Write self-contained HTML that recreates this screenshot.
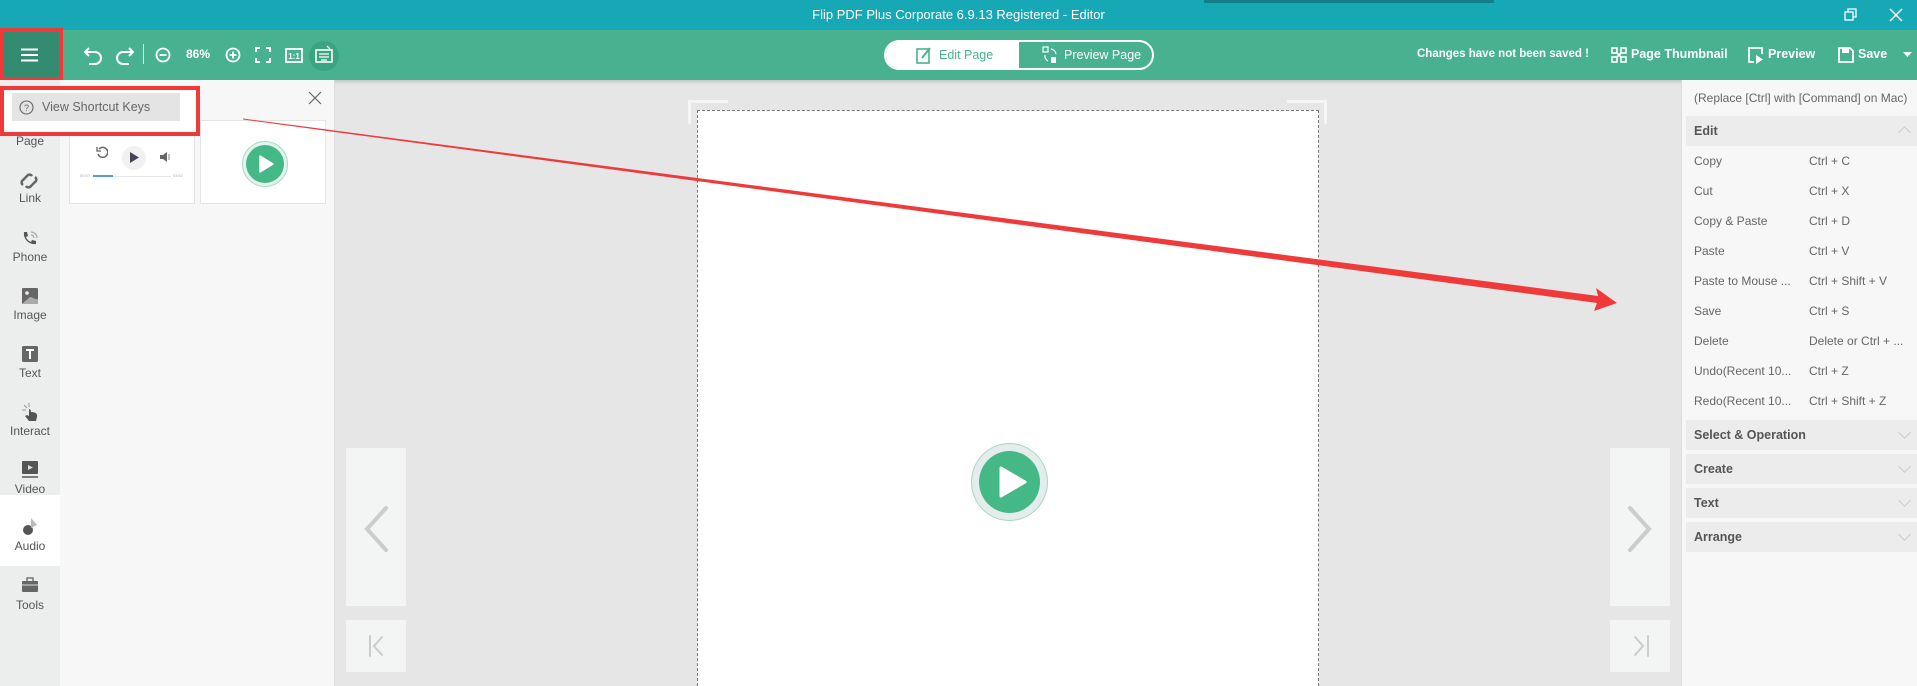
<!DOCTYPE html>
<html><head><meta charset="utf-8"><style>
*{box-sizing:border-box;margin:0;padding:0}
body{width:1917px;height:686px;overflow:hidden;position:relative;font-family:"Liberation Sans",Arial,sans-serif;background:#e6e6e6}
.a{position:absolute}
.title{left:0;top:0;width:1917px;height:30px;background:#17a8b6;color:#fff;font-size:13px;text-align:center;line-height:30px}
.tb{left:0;top:30px;width:1917px;height:50px;background:#48b290;box-shadow:0 2px 3px rgba(0,0,0,.15)}
.w{color:#fff;font-size:12.5px;font-weight:bold}
.nav{left:0;top:80px;width:60px;height:606px;background:#eceeee}
.ni{position:absolute;left:0;width:60px;text-align:center;font-size:12px;color:#555}
.panel{left:60px;top:80px;width:275px;height:606px;background:#f7f7f7;border-right:1px solid #ddd}
.rp{left:1681px;top:80px;width:236px;height:606px;background:#f7f7f7;border-left:1px solid #ddd}
.row{position:absolute;left:12px;font-size:12px;color:#666}
.row b{font-weight:normal;position:absolute;left:115px;white-space:nowrap}
.hd{position:absolute;left:4px;width:231px;height:30px;background:#ececec;font-size:12.5px;font-weight:bold;color:#555;line-height:30px;padding-left:8px}
.hd i{position:absolute;right:8px;top:8px;width:9px;height:9px;border-right:1px solid #ccc;border-bottom:1px solid #ccc;transform:rotate(45deg)}
.nb{background:#f3f4f4}
</style></head><body>
<div class="a title">Flip PDF Plus Corporate 6.9.13 Registered - Editor</div>
<div class="a" style="left:1204px;top:0;width:290px;height:3px;background:#127e88"></div>
<svg class="a" style="left:1844px;top:8px" width="14" height="14"><rect x="1" y="4" width="8" height="8" fill="none" stroke="#fff" stroke-width="1.3"/><path d="M4 4V1h8v8H9" fill="none" stroke="#fff" stroke-width="1.3"/></svg>
<svg class="a" style="left:1889px;top:8px" width="14" height="14"><path d="M1 1L13 13M13 1L1 13" stroke="#fff" stroke-width="1.5"/></svg>
<div class="a tb"></div>
<div class="a" style="left:0;top:28px;width:63px;height:53px;background:#338c6f;border:4px solid #f03a3a"></div>
<svg class="a" style="left:21px;top:48px" width="18" height="14"><path d="M0 1.5h17M0 7h17M0 12.5h17" stroke="#fff" stroke-width="2"/></svg>
<svg class="a" style="left:84px;top:45px" width="20" height="20"><path d="M5 3L1 7l4 4M1 7h10a6 6 0 010 12H5" fill="none" stroke="#fff" stroke-width="2"/></svg>
<svg class="a" style="left:114px;top:45px" width="20" height="20"><path d="M15 3l4 4-4 4M19 7H9a6 6 0 000 12h6" fill="none" stroke="#fff" stroke-width="2"/></svg>
<div class="a" style="left:143px;top:44px;width:1px;height:20px;background:#d7efe6"></div>
<svg class="a" style="left:155px;top:47px" width="16" height="16"><circle cx="8" cy="8" r="6.5" fill="none" stroke="#fff" stroke-width="1.8"/><path d="M4.5 8h7" stroke="#fff" stroke-width="1.8"/></svg>
<div class="a w" style="left:186px;top:47px;font-size:12px">86%</div>
<svg class="a" style="left:225px;top:47px" width="16" height="16"><circle cx="8" cy="8" r="6.5" fill="none" stroke="#fff" stroke-width="1.8"/><path d="M4.5 8h7M8 4.5v7" stroke="#fff" stroke-width="1.8"/></svg>
<svg class="a" style="left:255px;top:47px" width="16" height="16"><path d="M1 5V1h4M11 1h4v4M15 11v4h-4M5 15H1v-4" fill="none" stroke="#fff" stroke-width="2"/></svg>
<svg class="a" style="left:285px;top:48px" width="18" height="15"><rect x="1" y="1" width="16" height="13" fill="none" stroke="#fff" stroke-width="1.8"/><text x="9" y="11" fill="#fff" font-size="8" font-weight="bold" text-anchor="middle" font-family="Liberation Sans">1:1</text></svg>
<div class="a" style="left:309px;top:41px;width:30px;height:30px;border-radius:50%;background:#3aa37f"></div>
<svg class="a" style="left:315px;top:45px" width="18" height="20"><path d="M12 1l3 3" stroke="#fff" stroke-width="1.4"/><rect x="1" y="5" width="16" height="12" fill="none" stroke="#fff" stroke-width="1.6"/><path d="M4 9h10M4 12h10M6 15h6" stroke="#fff" stroke-width="1.3"/></svg>
<div class="a" style="left:884px;top:40px;width:270px;height:30px;border:2px solid #fff;border-radius:15px;overflow:hidden;background:#48b290">
 <div class="a" style="left:0;top:0;width:133px;height:26px;background:#fff"></div>
 <svg class="a" style="left:30px;top:4px" width="16" height="18"><rect x="1" y="3" width="12" height="14" fill="none" stroke="#48b290" stroke-width="1.6"/><path d="M6 12l8-10" stroke="#48b290" stroke-width="2"/></svg>
 <div class="a" style="left:53px;top:6px;color:#48b290;font-size:12.5px">Edit Page</div>
 <svg class="a" style="left:156px;top:4px" width="16" height="18"><rect x="1" y="1" width="5" height="5" fill="none" stroke="#fff" stroke-width="1.2"/><rect x="9" y="11" width="5" height="6" fill="#fff"/><path d="M9 3a6 6 0 015 5M3 9a6 6 0 003 6" fill="none" stroke="#fff" stroke-width="1.2"/></svg>
 <div class="a" style="left:178px;top:6px;color:#fff;font-size:12.5px">Preview Page</div>
</div>
<div class="a w" style="left:1417px;top:48px;font-size:11.5px">Changes have not been saved !</div>
<svg class="a" style="left:1611px;top:47px" width="16" height="16"><rect x="1" y="1" width="5" height="5" fill="none" stroke="#fff" stroke-width="1.6"/><rect x="10" y="1" width="5" height="5" fill="none" stroke="#fff" stroke-width="1.6"/><rect x="1" y="10" width="5" height="5" fill="none" stroke="#fff" stroke-width="1.6"/><rect x="10" y="10" width="5" height="5" fill="none" stroke="#fff" stroke-width="1.6"/><path d="M5 5l6 6M11 5l-6 6" stroke="#fff" stroke-width="1.6"/></svg>
<div class="a w" style="left:1631px;top:47px">Page Thumbnail</div>
<svg class="a" style="left:1748px;top:47px" width="16" height="17"><path d="M6 15H1V1h13v6" fill="none" stroke="#fff" stroke-width="1.8"/><path d="M8 8l7 4.5L8 17z" fill="#fff"/></svg>
<div class="a w" style="left:1768px;top:47px">Preview</div>
<svg class="a" style="left:1838px;top:47px" width="16" height="16"><path d="M1 1h11l3 3v11H1z" fill="none" stroke="#fff" stroke-width="1.8"/><rect x="4" y="1" width="7" height="5" fill="#fff"/></svg>
<div class="a w" style="left:1858px;top:47px">Save</div>
<svg class="a" style="left:1903px;top:52px" width="10" height="6"><path d="M0 0h9L4.5 5z" fill="#fff"/></svg>

<div class="a nav"></div>
<div class="a" style="left:0;top:495px;width:60px;height:71px;background:#fff"></div>
<div class="ni" style="top:134px">Page</div>
<svg class="a" style="left:20px;top:173px" width="18" height="16"><path d="M3 12a3 3 0 010-5l4-4a3 3 0 015 0M15 4a3 3 0 010 5l-4 4a3 3 0 01-5 0" fill="none" stroke="#666" stroke-width="2.5"/></svg>
<div class="ni" style="top:191px">Link</div>
<svg class="a" style="left:21px;top:230px" width="18" height="18"><path d="M3 2l3 0 1 4-2 1a8 8 0 005 5l1-2 4 1v3c-7 1-13-5-12-12z" fill="#555"/><path d="M10 2a6 6 0 016 6M10 5a3 3 0 013 3" fill="none" stroke="#aaa" stroke-width="1.3"/></svg>
<div class="ni" style="top:250px">Phone</div>
<svg class="a" style="left:22px;top:288px" width="16" height="16"><rect width="16" height="16" rx="1" fill="#666"/><path d="M0 16L8 9c3 0 5 3 8 2v5z" fill="#aaa"/><circle cx="5" cy="5" r="1.8" fill="#eee"/></svg>
<div class="ni" style="top:308px">Image</div>
<svg class="a" style="left:22px;top:346px" width="16" height="16"><rect width="16" height="16" rx="1.5" fill="#666"/><path d="M4 4h8M8 4v9" stroke="#fff" stroke-width="2"/></svg>
<div class="ni" style="top:366px">Text</div>
<svg class="a" style="left:20px;top:402px" width="20" height="20"><path d="M9 7c2 0 2 3 2 3 3 0 7 1 6 5l-1 4H9l-4-5 2-1 2 1z" fill="#555"/><path d="M4 3l3 3M9 1v4M2 8l4 0" stroke="#999" stroke-width="1"/></svg>
<div class="ni" style="top:424px">Interact</div>
<svg class="a" style="left:22px;top:461px" width="16" height="17"><rect width="16" height="13" rx="1" fill="#555"/><path d="M6 4l5 2.5L6 9z" fill="#ddd"/><path d="M0 16h16" stroke="#555" stroke-width="1.5"/></svg>
<div class="ni" style="top:482px">Video</div>
<svg class="a" style="left:22px;top:518px" width="16" height="18"><circle cx="6" cy="12" r="5" fill="#555"/><path d="M9 10V0l6 7z" fill="#bbb"/></svg>
<div class="ni" style="top:539px">Audio</div>
<svg class="a" style="left:22px;top:577px" width="16" height="15"><path d="M5 4V1h6v3" fill="none" stroke="#777" stroke-width="1.5"/><rect y="4" width="16" height="11" rx="1" fill="#666"/><path d="M0 8h16" stroke="#ddd" stroke-width="1"/></svg>
<div class="ni" style="top:598px">Tools</div>

<div class="a panel"></div>
<svg class="a" style="left:308px;top:91px" width="14" height="14"><path d="M1 1L13 13M13 1L1 13" stroke="#666" stroke-width="1.2"/></svg>
<div class="a" style="left:69px;top:120px;width:126px;height:84px;background:#fff;border:1px solid #e4e4e4"></div>
<div class="a" style="left:200px;top:120px;width:126px;height:84px;background:#fff;border:1px solid #e4e4e4"></div>
<svg class="a" style="left:96px;top:146px" width="12" height="12"><path d="M3 3a5 5 0 11-1 5" fill="none" stroke="#666" stroke-width="1.5"/><path d="M1 1v4h4" fill="none" stroke="#666" stroke-width="1.3"/></svg>
<div class="a" style="left:122px;top:146px;width:24px;height:24px;border-radius:50%;background:#f1f1f1"></div>
<svg class="a" style="left:130px;top:152px" width="10" height="11"><path d="M0 0l9 5.5L0 11z" fill="#445"/></svg>
<svg class="a" style="left:160px;top:152px" width="11" height="10"><path d="M0 3h3l4-3v10L3 7H0z" fill="#666"/><path d="M9 2v6" stroke="#888"/></svg>
<div class="a" style="left:93px;top:176px;width:78px;height:1px;background:#e6e6e6"></div>
<div class="a" style="left:93px;top:175px;width:20px;height:2px;background:#5b9ad8"></div>
<div class="a" style="left:80px;top:173px;font-size:4px;color:#aaa">00:57</div>
<div class="a" style="left:173px;top:173px;font-size:4px;color:#aaa">03:57</div>
<div class="a" style="left:242px;top:141px;width:46px;height:46px;border-radius:50%;background:#e5f3ee;border:1px solid #a9dcc8"></div>
<div class="a" style="left:246px;top:145px;width:38px;height:38px;border-radius:50%;background:#45b888"></div>
<svg class="a" style="left:259px;top:155px" width="15" height="18"><path d="M1 1l13 8L1 17z" fill="#fff" stroke="#fff" stroke-linejoin="round" stroke-width="1.5"/></svg>

<div class="a" style="left:0;top:86px;width:200px;height:50px;background:#fff;border:4px solid #f03a3a"></div>
<div class="a" style="left:12px;top:93px;width:168px;height:28px;background:#e4e4e4"></div>
<svg class="a" style="left:19px;top:100px" width="15" height="15"><circle cx="7.5" cy="7.5" r="6.5" fill="none" stroke="#666" stroke-width="1.1"/><text x="7.5" y="11" font-size="9" fill="#666" text-anchor="middle" font-family="Liberation Sans">?</text></svg>
<div class="a" style="left:42px;top:100px;font-size:12.5px;color:#666">View Shortcut Keys</div>

<div class="a" style="left:688px;top:100px;width:40px;height:24px;border-top:3px solid #f5f5f5;border-left:3px solid #f5f5f5"></div>
<div class="a" style="left:1287px;top:100px;width:40px;height:24px;border-top:3px solid #f5f5f5;border-right:3px solid #f5f5f5"></div>
<div class="a" style="left:697px;top:110px;width:622px;height:576px;background:#fff;border:1px dashed #777;border-bottom:none"></div>
<div class="a" style="left:971px;top:443px;width:77px;height:78px;border-radius:50%;background:#e4ecec;border:1px solid #a5d8c6"></div>
<div class="a" style="left:979px;top:451px;width:61px;height:62px;border-radius:50%;background:#45b888"></div>
<svg class="a" style="left:999px;top:466px" width="28" height="32"><path d="M2 2l24 14L2 30z" fill="#fff" stroke="#fff" stroke-linejoin="round" stroke-width="3"/></svg>

<div class="a nb" style="left:346px;top:448px;width:60px;height:158px"></div>
<svg class="a" style="left:362px;top:505px" width="28" height="48"><path d="M24 3L5 24l19 21" fill="none" stroke="#ccc" stroke-width="4" stroke-linecap="round"/></svg>
<div class="a nb" style="left:346px;top:620px;width:60px;height:52px"></div>
<svg class="a" style="left:367px;top:634px" width="20" height="24"><path d="M3 2v20M15 3L7 12l8 9" fill="none" stroke="#ccc" stroke-width="2" stroke-linecap="round"/></svg>
<div class="a nb" style="left:1610px;top:448px;width:60px;height:158px"></div>
<svg class="a" style="left:1626px;top:505px" width="28" height="48"><path d="M4 3l19 21L4 45" fill="none" stroke="#ccc" stroke-width="4" stroke-linecap="round"/></svg>
<div class="a nb" style="left:1610px;top:620px;width:60px;height:52px"></div>
<svg class="a" style="left:1631px;top:634px" width="20" height="24"><path d="M17 2v20M4 3l8 9-8 9" fill="none" stroke="#ccc" stroke-width="2" stroke-linecap="round"/></svg>

<div class="a rp">
 <div class="row" style="top:11px;white-space:nowrap">(Replace [Ctrl] with [Command] on Mac)</div>
 <div class="hd" style="top:36px">Edit<i style="transform:rotate(225deg);top:12px"></i></div>
 <div class="row" style="top:74px">Copy<b>Ctrl + C</b></div>
 <div class="row" style="top:104px">Cut<b>Ctrl + X</b></div>
 <div class="row" style="top:134px">Copy &amp; Paste<b>Ctrl + D</b></div>
 <div class="row" style="top:164px">Paste<b>Ctrl + V</b></div>
 <div class="row" style="top:194px">Paste to Mouse ...<b>Ctrl + Shift + V</b></div>
 <div class="row" style="top:224px">Save<b>Ctrl + S</b></div>
 <div class="row" style="top:254px">Delete<b>Delete or Ctrl + ...</b></div>
 <div class="row" style="top:284px">Undo(Recent 10...<b>Ctrl + Z</b></div>
 <div class="row" style="top:314px">Redo(Recent 10...<b>Ctrl + Shift + Z</b></div>
 <div class="hd" style="top:340px">Select &amp; Operation<i></i></div>
 <div class="hd" style="top:374px">Create<i></i></div>
 <div class="hd" style="top:408px">Text<i></i></div>
 <div class="hd" style="top:442px">Arrange<i></i></div>
</div>

<svg class="a" style="left:0;top:0" width="1917" height="686"><polygon points="243,118.5 1598,296 1596,288 1617,303 1594,311 1597,303 243,119.5" fill="#f03a3a"/></svg>
</body></html>
